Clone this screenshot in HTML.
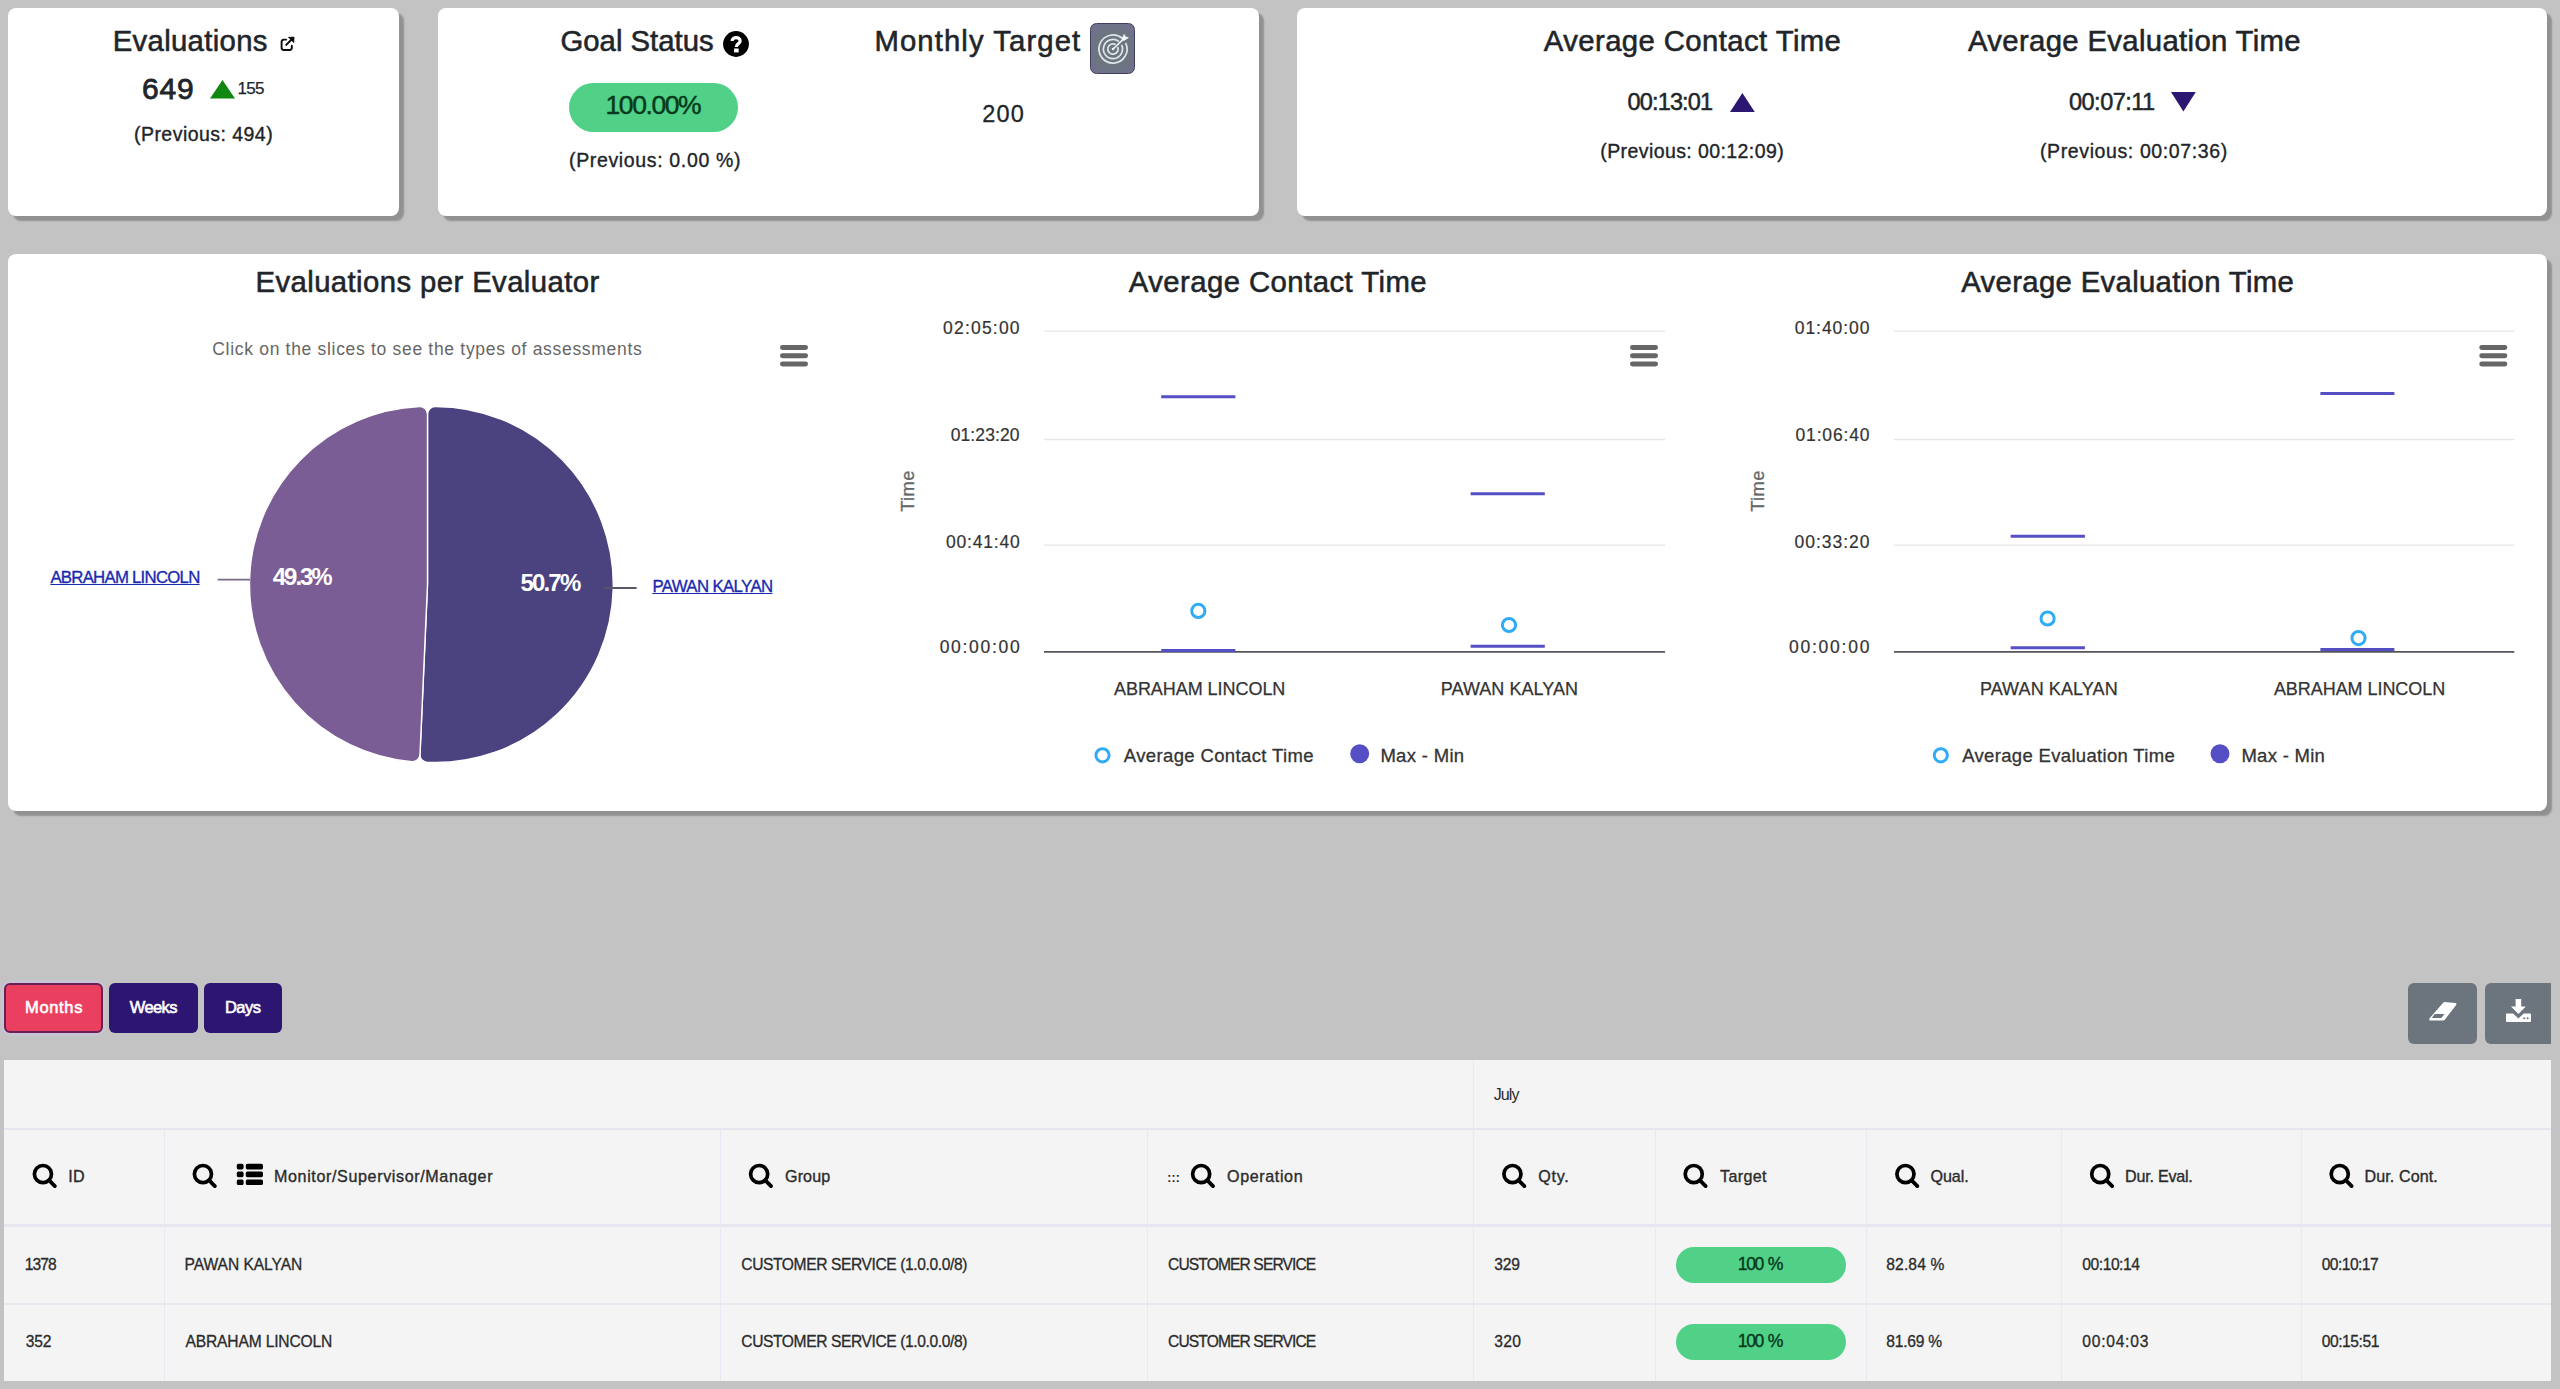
<!DOCTYPE html>
<html lang="en">
<head>
<meta charset="utf-8">
<title>Evaluations Dashboard</title>
<style>
html,body{margin:0;padding:0}
body{width:2560px;height:1389px;overflow:hidden;position:relative;background:#c3c3c3;font-family:"Liberation Sans",sans-serif;color:#212529}
.abs{position:absolute}
.card{position:absolute;background:#fff;border-radius:8px;box-shadow:5px 5px 1.6px rgba(0,0,0,.255)}
.t{position:absolute;white-space:pre;line-height:1;margin:0;padding:0}
.pill{position:absolute;background:#50d187;border-radius:999px}
.btn{position:absolute;border-radius:6px;box-sizing:border-box}
.tbl{position:absolute;left:4px;top:1060.4px;width:2547px;height:320.3px;background:#f4f4f5}
.hl{position:absolute;background:#e5e6ef}
.vl{position:absolute;background:#e7e8f1;width:1px}
svg{position:absolute;overflow:visible}
</style>
</head>
<body>

<!-- ======= top cards ======= -->
<div class="card" style="left:8px;top:8px;width:391px;height:207.5px"></div>
<div class="card" style="left:437.5px;top:8px;width:821.5px;height:207.5px"></div>
<div class="card" style="left:1297px;top:8px;width:1249.5px;height:207.5px"></div>

<!-- external link icon -->
<svg style="left:280px;top:36px" width="16" height="16" viewBox="0 0 16 16">
  <path d="M6.2 3.6H3.8a2.2 2.2 0 0 0-2.2 2.2v6a2.2 2.2 0 0 0 2.2 2.2h5.8a2.2 2.2 0 0 0 2.2-2.2V9.7" fill="none" stroke="#0a0a0a" stroke-width="1.9" stroke-linecap="round"/>
  <path d="M6.2 8.9L11.6 3.5" fill="none" stroke="#0a0a0a" stroke-width="2" stroke-linecap="round"/>
  <path d="M8.3 1.3L14.1 1.05L13.85 6.7z" fill="#0a0a0a" stroke="#0a0a0a" stroke-width="0.6" stroke-linejoin="round"/>
</svg>
<!-- green up triangle -->
<svg style="left:209.5px;top:80.3px" width="25" height="18.4" viewBox="0 0 25 18.4"><polygon points="12.5,0 25,18.4 0,18.4" fill="#10870f"/></svg>

<!-- question circle -->
<svg style="left:723.1px;top:30.7px" width="26" height="26" viewBox="-13 -13 26 26">
  <circle cx="0" cy="0" r="12.9" fill="#000"/>
  <path d="M-3.9 -2.9C-3.9 -7.6 4.1 -7.6 4.1 -3.1C4.1 -0.2 0.35 -0.5 0.35 2.9" fill="none" stroke="#fff" stroke-width="3.3"/>
  <rect x="-1.95" y="4.5" width="4.6" height="3.9" fill="#fff"/>
</svg>
<!-- goal pill -->
<div class="pill" style="left:568.7px;top:83.2px;width:169.3px;height:48.5px"></div>

<!-- target icon button -->
<div class="abs" style="left:1090px;top:22.5px;width:45px;height:51px;background:radial-gradient(ellipse 62% 56% at 50% 52%,#6b757e 0,#6b757e 55%,#70718a 100%);border:1.6px solid #403e5e;border-radius:6.5px;box-sizing:border-box"></div>
<svg style="left:1095px;top:31px" width="36" height="36" viewBox="-18 -18 36 36" fill="none" stroke="#dfe3ea" stroke-width="1.75">
  <path d="M9.2 -10.6A14.05 14.05 0 1 0 12.6 -6.2"/>
  <path d="M6 -7.4A9.55 9.55 0 1 0 8.6 -4.1"/>
  <path d="M2.6 -4.5A5.2 5.2 0 1 0 4.7 -2.2"/>
  <circle cx="0" cy="0" r="1.3" fill="#eef1f5" stroke="none"/>
  <path d="M0 0L11 -10.4" stroke-width="1.7" stroke="#eef1f5"/>
  <path d="M9.3 -10.9l1.9 -3.7 1.2 2.6 2.9 .6 -3.5 2.5 -2.6 .4z" fill="#f4f6f9" stroke="#f4f6f9" stroke-width="0.8" stroke-linejoin="round"/>
</svg>
<!-- indigo triangles -->
<svg style="left:1729.8px;top:92.8px" width="24.8" height="18.9" viewBox="0 0 24.8 18.9"><polygon points="12.4,0 24.8,18.9 0,18.9" fill="#2b1772"/></svg>
<svg style="left:2171px;top:92.3px" width="24.8" height="19.4" viewBox="0 0 24.8 19.4"><polygon points="0,0 24.8,0 12.4,19.4" fill="#2b1772"/></svg>

<!-- ======= chart panel ======= -->
<div class="card" style="left:8px;top:254px;width:2538.5px;height:557.2px"></div>

<svg style="left:0;top:0" width="2560" height="830" viewBox="0 0 2560 830">
  <!-- pie -->
  <g stroke="#fff" stroke-width="1.4" stroke-linejoin="round">
    <path d="M427.5 584.4L427.50 414.07A7.5 7.5 0 0 1 435.33 406.57A178.0 178.0 0 1 1 427.50 762.40A7.5 7.5 0 0 1 420.01 754.57Z" fill="#4a4380"/>
    <path d="M427.5 584.4L420.01 754.57A7.5 7.5 0 0 1 411.86 761.71A178.0 178.0 0 0 1 419.67 406.57A7.5 7.5 0 0 1 427.50 414.07Z" fill="#7a5d94"/>
  </g>
  <path d="M217.7 579.6H250" stroke="#776a86" stroke-width="1.8" fill="none"/>
  <path d="M604.4 588H636.6" stroke="#5a5868" stroke-width="1.8" fill="none"/>

  <!-- hamburgers -->
  <g fill="#666">
    <rect x="780" y="345.0" width="28" height="5" rx="2.4"/><rect x="780" y="353.2" width="28" height="5" rx="2.4"/><rect x="780" y="361.4" width="28" height="5" rx="2.4"/>
    <rect x="1630" y="345.0" width="28" height="5" rx="2.4"/><rect x="1630" y="353.2" width="28" height="5" rx="2.4"/><rect x="1630" y="361.4" width="28" height="5" rx="2.4"/>
    <rect x="2479.3" y="345.0" width="28" height="5" rx="2.4"/><rect x="2479.3" y="353.2" width="28" height="5" rx="2.4"/><rect x="2479.3" y="361.4" width="28" height="5" rx="2.4"/>
  </g>

  <!-- chart 2 grid -->
  <g stroke="#e6e6e6" stroke-width="1.3">
    <path d="M1044 331.2H1665"/><path d="M1044 439.5H1665"/><path d="M1044 545.2H1665"/>
    <path d="M1894 331.2H2514.3"/><path d="M1894 439.5H2514.3"/><path d="M1894 545.2H2514.3"/>
  </g>
  <g stroke="#55555c" stroke-width="1.7">
    <path d="M1044 651.8H1665"/><path d="M1894 651.8H2514.3"/>
  </g>
  <!-- range dashes -->
  <g stroke="#544fc5" stroke-width="3">
    <path d="M1161.2 396.7H1235.4"/><path d="M1161.2 650.6H1235.4"/>
    <path d="M1470.6 493.8H1544.8"/><path d="M1470.6 646.3H1544.8"/>
    <path d="M2010.7 536.2H2084.9"/><path d="M2010.7 647.8H2084.9"/>
    <path d="M2320.4 393.4H2394.4"/><path d="M2320.4 649.4H2394.4"/>
  </g>
  <!-- average markers -->
  <g fill="#fff" stroke="#30abf5" stroke-width="3">
    <circle cx="1198.3" cy="610.9" r="6.6"/><circle cx="1509" cy="625" r="6.6"/>
    <circle cx="2047.6" cy="618.5" r="6.6"/><circle cx="2358.5" cy="638.1" r="6.6"/>
    <circle cx="1102.5" cy="755.3" r="6.6"/><circle cx="1940.8" cy="755.3" r="6.6"/>
  </g>
  <g fill="#544fc5">
    <circle cx="1359.7" cy="753.8" r="9.5"/><circle cx="2220" cy="753.8" r="9.5"/>
  </g>
</svg>

<!-- ======= period buttons ======= -->
<div class="btn" style="left:4px;top:983px;width:98.5px;height:49.5px;background:#eb3f60;border:2px solid #6a1f55;box-shadow:0 0 0 3px rgba(203,196,224,.55)"></div>
<div class="btn" style="left:108.8px;top:983px;width:89.4px;height:49.5px;background:#2c1672"></div>
<div class="btn" style="left:204.3px;top:983px;width:77.5px;height:49.5px;background:#2c1672"></div>

<!-- right action buttons -->
<div class="btn" style="left:2407.6px;top:983.3px;width:69.2px;height:61.2px;background:#6c757d"></div>
<div class="btn" style="left:2484.9px;top:983.3px;width:66.1px;height:61.2px;background:#6c757d;border-radius:6px 0 0 6px"></div>
<!-- eraser -->
<svg style="left:2420px;top:995px" width="44" height="32" viewBox="2420 995 44 32">
  <path d="M2444.3 1003.3L2455.2 1004.2L2443.6 1019.3H2430.3z" fill="#fff" stroke="#fff" stroke-width="2.4" stroke-linejoin="round"/>
  <path d="M2434.7 1013.9H2444.6L2441.3 1018H2431.8z" fill="#6c757d"/>
</svg>
<!-- download -->
<svg style="left:2506px;top:998.5px" width="25" height="23" viewBox="0 0 25 23">
  <path d="M9.6 0h5.6v7.4h4.6l-7.4 7.6L5 7.4h4.6z" fill="#fff"/>
  <path d="M1 14.4h6l5.4 5 5.4-5h6.2a1 1 0 0 1 1 1V22a1 1 0 0 1-1 1H1a1 1 0 0 1-1-1v-6.6a1 1 0 0 1 1-1z" fill="#fff"/>
  <circle cx="18.2" cy="19.2" r="1" fill="#6c757d"/><circle cx="21.6" cy="19.2" r="1" fill="#6c757d"/>
</svg>

<!-- ======= table ======= -->
<div class="tbl"></div>
<div class="hl" style="left:4px;top:1127.7px;width:2547px;height:2.8px"></div>
<div class="hl" style="left:4px;top:1224.2px;width:2547px;height:2.8px"></div>
<div class="hl" style="left:4px;top:1303px;width:2547px;height:1.8px;background:#e8e8f1"></div>
<div class="vl" style="left:164px;top:1130px;height:251px"></div>
<div class="vl" style="left:720px;top:1130px;height:251px"></div>
<div class="vl" style="left:1146.8px;top:1130px;height:251px"></div>
<div class="vl" style="left:1473.4px;top:1060px;height:321px"></div>
<div class="vl" style="left:1655px;top:1130px;height:251px"></div>
<div class="vl" style="left:1865.5px;top:1130px;height:251px"></div>
<div class="vl" style="left:2060.8px;top:1130px;height:251px"></div>
<div class="vl" style="left:2300.5px;top:1130px;height:251px"></div>

<!-- table pills -->
<div class="pill" style="left:1675.8px;top:1247.4px;width:170px;height:35.6px"></div>
<div class="pill" style="left:1675.8px;top:1324.2px;width:170px;height:35.4px"></div>

<!-- search icons + list icon -->
<svg style="left:0;top:1160px" width="2560" height="32" viewBox="0 1160 2560 32">
  <defs>
    <g id="srch" fill="none" stroke="#000">
      <circle cx="10.4" cy="10.4" r="8.55" stroke-width="3.7"/>
      <path d="M16.6 16.7L22.3 22.4" stroke-width="3.8" stroke-linecap="round"/>
    </g>
  </defs>
  <use href="#srch" x="32.55" y="1163.65"/>
  <use href="#srch" x="192.55" y="1163.65"/>
  <use href="#srch" x="748.75" y="1163.65"/>
  <use href="#srch" x="1190.75" y="1163.65"/>
  <use href="#srch" x="1502.05" y="1163.65"/>
  <use href="#srch" x="1683.35" y="1163.65"/>
  <use href="#srch" x="1895.05" y="1163.65"/>
  <use href="#srch" x="2089.85" y="1163.65"/>
  <use href="#srch" x="2329.35" y="1163.65"/>
  <g fill="#000">
    <rect x="236.8" y="1163.8" width="6.8" height="5.6" rx="1.6"/><rect x="245.8" y="1163.8" width="17.2" height="5.6" rx="1.6"/>
    <rect x="236.8" y="1171.6" width="6.8" height="5.6" rx="1.6"/><rect x="245.8" y="1171.6" width="17.2" height="5.6" rx="1.6"/>
    <rect x="236.8" y="1179.4" width="6.8" height="5.6" rx="1.6"/><rect x="245.8" y="1179.4" width="17.2" height="5.6" rx="1.6"/>
  </g>
</svg>

<div class="t" style="left:112.7px;top:25.6px;font-size:29.3px;letter-spacing:0.33px;color:#212529;-webkit-text-stroke:0.55px #212529;">Evaluations</div>
<div class="t" style="left:141.9px;top:73.8px;font-size:30px;letter-spacing:0.85px;color:#212529;-webkit-text-stroke:0.8px #212529;">649</div>
<div class="t" style="left:237.6px;top:79.8px;font-size:17px;letter-spacing:-0.80px;color:#212529;-webkit-text-stroke:0.25px #212529;">155</div>
<div class="t" style="left:134.0px;top:124.7px;font-size:19.5px;letter-spacing:0.46px;color:#212529;-webkit-text-stroke:0.35px #212529;">(Previous: 494)</div>
<div class="t" style="left:560.5px;top:26.0px;font-size:29.3px;letter-spacing:0.00px;color:#212529;-webkit-text-stroke:0.55px #212529;">Goal Status</div>
<div class="t" style="left:605.5px;top:92.2px;font-size:26.5px;letter-spacing:-1.42px;color:#073a1d;-webkit-text-stroke:0.45px #073a1d;">100.00%</div>
<div class="t" style="left:569.0px;top:151.0px;font-size:19.5px;letter-spacing:0.65px;color:#212529;-webkit-text-stroke:0.35px #212529;">(Previous: 0.00 %)</div>
<div class="t" style="left:874.5px;top:26.0px;font-size:29.3px;letter-spacing:1.08px;color:#212529;-webkit-text-stroke:0.55px #212529;">Monthly Target</div>
<div class="t" style="left:982.3px;top:102.7px;font-size:23.5px;letter-spacing:1.20px;color:#212529;-webkit-text-stroke:0.3px #212529;">200</div>
<div class="t" style="left:1543.8px;top:26.0px;font-size:29.3px;letter-spacing:0.41px;color:#212529;-webkit-text-stroke:0.55px #212529;">Average Contact Time</div>
<div class="t" style="left:1627.5px;top:91.0px;font-size:23.5px;letter-spacing:-0.84px;color:#212529;-webkit-text-stroke:0.5px #212529;">00:13:01</div>
<div class="t" style="left:1600.3px;top:142.0px;font-size:19.5px;letter-spacing:0.41px;color:#212529;-webkit-text-stroke:0.35px #212529;">(Previous: 00:12:09)</div>
<div class="t" style="left:1968.0px;top:26.0px;font-size:29.3px;letter-spacing:0.34px;color:#212529;-webkit-text-stroke:0.55px #212529;">Average Evaluation Time</div>
<div class="t" style="left:2069.0px;top:91.0px;font-size:23.5px;letter-spacing:-0.51px;color:#212529;-webkit-text-stroke:0.5px #212529;">00:07:11</div>
<div class="t" style="left:2040.0px;top:142.0px;font-size:19.5px;letter-spacing:0.61px;color:#212529;-webkit-text-stroke:0.35px #212529;">(Previous: 00:07:36)</div>
<div class="t" style="left:255.5px;top:267.0px;font-size:29.3px;letter-spacing:0.41px;color:#212529;-webkit-text-stroke:0.55px #212529;">Evaluations per Evaluator</div>
<div class="t" style="left:212.3px;top:340.5px;font-size:17.5px;letter-spacing:0.69px;color:#666666;">Click on the slices to see the types of assessments</div>
<div class="t" style="left:272.8px;top:565.4px;font-size:24px;letter-spacing:-2.05px;color:#ffffff;font-weight:700;">49.3%</div>
<div class="t" style="left:520.4px;top:570.8px;font-size:24px;letter-spacing:-1.80px;color:#ffffff;font-weight:700;">50.7%</div>
<div class="t" style="left:50.4px;top:569.8px;font-size:16.8px;letter-spacing:-0.75px;color:#1a2aae;text-decoration:underline;text-underline-offset:0.5px;text-decoration-thickness:1.4px;-webkit-text-stroke:0.35px #1a2aae;">ABRAHAM LINCOLN</div>
<div class="t" style="left:652.4px;top:578.6px;font-size:16.8px;letter-spacing:-0.61px;color:#1a2aae;text-decoration:underline;text-underline-offset:0.5px;text-decoration-thickness:1.4px;-webkit-text-stroke:0.35px #1a2aae;">PAWAN KALYAN</div>
<div class="t" style="left:1128.7px;top:266.7px;font-size:29.3px;letter-spacing:0.45px;color:#212529;-webkit-text-stroke:0.55px #212529;">Average Contact Time</div>
<div class="t" style="left:943.0px;top:319.7px;font-size:17.5px;letter-spacing:1.21px;color:#333333;-webkit-text-stroke:0.2px #333;">02:05:00</div>
<div class="t" style="left:950.7px;top:426.5px;font-size:17.5px;letter-spacing:0.11px;color:#333333;-webkit-text-stroke:0.2px #333;">01:23:20</div>
<div class="t" style="left:946.0px;top:534.0px;font-size:17.5px;letter-spacing:0.79px;color:#333333;-webkit-text-stroke:0.2px #333;">00:41:40</div>
<div class="t" style="left:939.7px;top:639.2px;font-size:17.5px;letter-spacing:1.69px;color:#333333;-webkit-text-stroke:0.2px #333;">00:00:00</div>
<div class="t" style="left:1114.0px;top:680.2px;font-size:18px;letter-spacing:-0.05px;color:#333333;-webkit-text-stroke:0.25px #333;">ABRAHAM LINCOLN</div>
<div class="t" style="left:1440.8px;top:680.2px;font-size:18px;letter-spacing:0.05px;color:#333333;-webkit-text-stroke:0.25px #333;">PAWAN KALYAN</div>
<div class="t" style="left:1123.8px;top:746.5px;font-size:18.5px;letter-spacing:0.37px;color:#333333;-webkit-text-stroke:0.3px #333;">Average Contact Time</div>
<div class="t" style="left:1380.4px;top:746.5px;font-size:18.5px;letter-spacing:0.32px;color:#333333;-webkit-text-stroke:0.3px #333;">Max - Min</div>
<div class="t" style="left:1961.2px;top:266.7px;font-size:29.3px;letter-spacing:0.34px;color:#212529;-webkit-text-stroke:0.55px #212529;">Average Evaluation Time</div>
<div class="t" style="left:1794.8px;top:319.7px;font-size:17.5px;letter-spacing:0.93px;color:#333333;-webkit-text-stroke:0.2px #333;">01:40:00</div>
<div class="t" style="left:1795.5px;top:426.5px;font-size:17.5px;letter-spacing:0.83px;color:#333333;-webkit-text-stroke:0.2px #333;">01:06:40</div>
<div class="t" style="left:1794.5px;top:534.0px;font-size:17.5px;letter-spacing:0.97px;color:#333333;-webkit-text-stroke:0.2px #333;">00:33:20</div>
<div class="t" style="left:1788.9px;top:639.2px;font-size:17.5px;letter-spacing:1.77px;color:#333333;-webkit-text-stroke:0.2px #333;">00:00:00</div>
<div class="t" style="left:1979.9px;top:680.2px;font-size:18px;letter-spacing:0.10px;color:#333333;-webkit-text-stroke:0.25px #333;">PAWAN KALYAN</div>
<div class="t" style="left:2273.9px;top:680.2px;font-size:18px;letter-spacing:-0.05px;color:#333333;-webkit-text-stroke:0.25px #333;">ABRAHAM LINCOLN</div>
<div class="t" style="left:1962.2px;top:746.5px;font-size:18.5px;letter-spacing:0.33px;color:#333333;-webkit-text-stroke:0.3px #333;">Average Evaluation Time</div>
<div class="t" style="left:2241.4px;top:746.5px;font-size:18.5px;letter-spacing:0.29px;color:#333333;-webkit-text-stroke:0.3px #333;">Max - Min</div>
<div class="t" style="left:25.0px;top:999.4px;font-size:16.5px;letter-spacing:0.66px;color:#ffffff;-webkit-text-stroke:0.6px #fff;">Months</div>
<div class="t" style="left:129.8px;top:999.4px;font-size:16.5px;letter-spacing:-0.62px;color:#ffffff;-webkit-text-stroke:0.6px #fff;">Weeks</div>
<div class="t" style="left:225.0px;top:999.4px;font-size:16.5px;letter-spacing:-0.57px;color:#ffffff;-webkit-text-stroke:0.6px #fff;">Days</div>
<div class="t" style="left:1493.8px;top:1087.0px;font-size:16px;letter-spacing:-0.93px;color:#2b2b2b;">July</div>
<div class="t" style="left:68.3px;top:1167.8px;font-size:16.1px;letter-spacing:0.20px;color:#2b2b2b;-webkit-text-stroke:0.35px #2b2b2b;">ID</div>
<div class="t" style="left:274.0px;top:1167.8px;font-size:16.1px;letter-spacing:0.62px;color:#2b2b2b;-webkit-text-stroke:0.35px #2b2b2b;">Monitor/Supervisor/Manager</div>
<div class="t" style="left:785.0px;top:1167.8px;font-size:16.1px;letter-spacing:0.12px;color:#2b2b2b;-webkit-text-stroke:0.35px #2b2b2b;">Group</div>
<div class="t" style="left:1167.2px;top:1172.3px;font-size:12px;letter-spacing:0.30px;color:#222222;font-weight:700;">:::</div>
<div class="t" style="left:1227.0px;top:1167.8px;font-size:16.1px;letter-spacing:0.62px;color:#2b2b2b;-webkit-text-stroke:0.35px #2b2b2b;">Operation</div>
<div class="t" style="left:1538.3px;top:1167.8px;font-size:16.1px;letter-spacing:0.73px;color:#2b2b2b;-webkit-text-stroke:0.35px #2b2b2b;">Qty.</div>
<div class="t" style="left:1720.0px;top:1167.8px;font-size:16.1px;letter-spacing:0.36px;color:#2b2b2b;-webkit-text-stroke:0.35px #2b2b2b;">Target</div>
<div class="t" style="left:1930.5px;top:1167.8px;font-size:16.1px;letter-spacing:-0.05px;color:#2b2b2b;-webkit-text-stroke:0.35px #2b2b2b;">Qual.</div>
<div class="t" style="left:2125.0px;top:1167.8px;font-size:16.1px;letter-spacing:-0.22px;color:#2b2b2b;-webkit-text-stroke:0.35px #2b2b2b;">Dur. Eval.</div>
<div class="t" style="left:2364.5px;top:1167.8px;font-size:16.1px;letter-spacing:0.09px;color:#2b2b2b;-webkit-text-stroke:0.35px #2b2b2b;">Dur. Cont.</div>
<div class="t" style="left:24.8px;top:1256.7px;font-size:15.6px;letter-spacing:-0.93px;color:#2b2b2b;-webkit-text-stroke:0.3px #2b2b2b;">1378</div>
<div class="t" style="left:184.5px;top:1256.7px;font-size:15.6px;letter-spacing:-0.05px;color:#2b2b2b;-webkit-text-stroke:0.3px #2b2b2b;">PAWAN KALYAN</div>
<div class="t" style="left:741.3px;top:1256.7px;font-size:15.6px;letter-spacing:-0.40px;color:#2b2b2b;-webkit-text-stroke:0.3px #2b2b2b;">CUSTOMER SERVICE (1.0.0.0/8)</div>
<div class="t" style="left:1168.0px;top:1256.7px;font-size:15.6px;letter-spacing:-0.88px;color:#2b2b2b;-webkit-text-stroke:0.3px #2b2b2b;">CUSTOMER SERVICE</div>
<div class="t" style="left:1494.3px;top:1256.7px;font-size:15.6px;letter-spacing:-0.15px;color:#2b2b2b;-webkit-text-stroke:0.3px #2b2b2b;">329</div>
<div class="t" style="left:1737.8px;top:1256.0px;font-size:17.6px;letter-spacing:-1.45px;color:#073a1d;-webkit-text-stroke:0.4px #073a1d;word-spacing:1.5px;">100 %</div>
<div class="t" style="left:1886.3px;top:1256.7px;font-size:15.6px;letter-spacing:0.13px;color:#2b2b2b;-webkit-text-stroke:0.3px #2b2b2b;">82.84 %</div>
<div class="t" style="left:2082.3px;top:1256.7px;font-size:15.6px;letter-spacing:-0.44px;color:#2b2b2b;-webkit-text-stroke:0.3px #2b2b2b;">00:10:14</div>
<div class="t" style="left:2321.7px;top:1256.7px;font-size:15.6px;letter-spacing:-0.53px;color:#2b2b2b;-webkit-text-stroke:0.3px #2b2b2b;">00:10:17</div>
<div class="t" style="left:25.8px;top:1333.8px;font-size:15.6px;letter-spacing:-0.25px;color:#2b2b2b;-webkit-text-stroke:0.3px #2b2b2b;">352</div>
<div class="t" style="left:185.5px;top:1333.8px;font-size:15.6px;letter-spacing:-0.16px;color:#2b2b2b;-webkit-text-stroke:0.3px #2b2b2b;">ABRAHAM LINCOLN</div>
<div class="t" style="left:741.3px;top:1333.8px;font-size:15.6px;letter-spacing:-0.40px;color:#2b2b2b;-webkit-text-stroke:0.3px #2b2b2b;">CUSTOMER SERVICE (1.0.0.0/8)</div>
<div class="t" style="left:1168.0px;top:1333.8px;font-size:15.6px;letter-spacing:-0.88px;color:#2b2b2b;-webkit-text-stroke:0.3px #2b2b2b;">CUSTOMER SERVICE</div>
<div class="t" style="left:1494.3px;top:1333.8px;font-size:15.6px;letter-spacing:0.25px;color:#2b2b2b;-webkit-text-stroke:0.3px #2b2b2b;">320</div>
<div class="t" style="left:1737.8px;top:1333.0px;font-size:17.6px;letter-spacing:-1.45px;color:#073a1d;-webkit-text-stroke:0.4px #073a1d;word-spacing:1.5px;">100 %</div>
<div class="t" style="left:1886.3px;top:1333.8px;font-size:15.6px;letter-spacing:-0.22px;color:#2b2b2b;-webkit-text-stroke:0.3px #2b2b2b;">81.69 %</div>
<div class="t" style="left:2082.3px;top:1333.8px;font-size:15.6px;letter-spacing:0.76px;color:#2b2b2b;-webkit-text-stroke:0.3px #2b2b2b;">00:04:03</div>
<div class="t" style="left:2321.7px;top:1333.8px;font-size:15.6px;letter-spacing:-0.44px;color:#2b2b2b;-webkit-text-stroke:0.3px #2b2b2b;">00:15:51</div>
<div class="t" style="left:908.0px;top:490.5px;font-size:18.3px;color:#666666;letter-spacing:0.4px;-webkit-text-stroke:0.3px #666666;transform:translate(-50%,-50%) rotate(-90deg)">Time</div>
<div class="t" style="left:1757.5px;top:490.5px;font-size:18.3px;color:#666666;letter-spacing:0.4px;-webkit-text-stroke:0.3px #666666;transform:translate(-50%,-50%) rotate(-90deg)">Time</div>
</body>
</html>
